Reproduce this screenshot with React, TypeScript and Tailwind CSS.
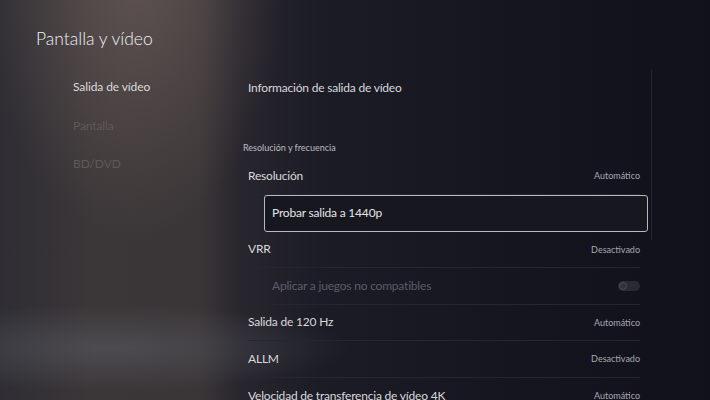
const menu = [
  { label: "Salida de vídeo", active: true },
  { label: "Pantalla", active: false },
  { label: "BD/DVD", active: false },
];

function Row({
  label,
  value,
  indent = false,
  dim = false,
  last = false,
  children,
}: {
  label: string;
  value?: string;
  indent?: boolean;
  dim?: boolean;
  last?: boolean;
  children?: React.ReactNode;
}) {
  return (
    <div
      className={`flex h-[36.5px] items-center justify-between ${indent ? "ml-[24px]" : ""} ${
        last ? "" : "border-b border-[#262632]"
      }`}
    >
      <span className={`text-[12px] tracking-[-0.2px] ${dim ? "text-[#5c5c66]" : "text-[#d8d8dd]"}`}>
        {label}
      </span>
      {value && <span className="text-[9px] text-[#a8a8b0]">{value}</span>}
      {children}
    </div>
  );
}

export default function App() {
  return (
    <div
      className="relative flex h-[400px] w-[710px] flex-col overflow-hidden bg-[radial-gradient(ellipse_150px_270px_at_135px_-30px,rgba(130,112,106,0.5),transparent),radial-gradient(ellipse_240px_44px_at_110px_348px,rgba(95,97,106,0.5),transparent),linear-gradient(90deg,#2f2e34_0px,#3b3638_90px,#3a3537_200px,#28262d_240px,#1c1c26_320px,#15151f_520px,#11111b_710px)]"
      style={{ fontFamily: 'Lato, "Noto Sans", sans-serif' }}
    >
      <header className="h-[68px] shrink-0 pl-[36px] pt-[27px]">
        <h1 className="text-[17.5px] font-light leading-[24px] text-[#f0f0f2]">Pantalla y vídeo</h1>
      </header>

      <div className="flex flex-1">
        <nav className="w-[240px] shrink-0 pl-[73px]">
          {menu.map((m) => (
            <div
              key={m.label}
              className={`flex h-[38.5px] items-center text-[12px] tracking-[-0.1px] ${
                m.active ? "text-[#dcdada]" : "text-[#5f5959]"
              }`}
            >
              {m.label}
            </div>
          ))}
        </nav>

        <main className="relative w-[412px] shrink-0">
          <div className="absolute right-0 top-[2px] h-[170px] w-px bg-[#262633]" />

          <div className="ml-[8px] mr-[12px] flex h-[39px] items-center text-[12px] tracking-[-0.2px] text-[#d8d8dd]">
            Información de salida de vídeo
          </div>

          <div className="mt-[33px] flex h-[16px] items-center pl-[3px] text-[9px] text-[#bcbcc2]">
            Resolución y frecuencia
          </div>

          <div className="ml-[8px] mr-[12px] mt-[2px]">
            <Row label="Resolución" value="Automático" />
            <div className="-mr-[8px] ml-[16px] flex h-[37px] items-center rounded-[3px] border-[1.5px] border-[#b9b9c0] bg-[#17171f] pl-[7px] text-[12px] tracking-[-0.2px] text-[#e4e4e8]">
              Probar salida a 1440p
            </div>
            <Row label="VRR" value="Desactivado" />
            <Row label="Aplicar a juegos no compatibles" indent dim>
              <span className="flex h-[10px] w-[22px] items-center rounded-full bg-[#2a2a34] pl-[1px]">
                <span className="h-[8px] w-[8px] rounded-full border border-[#4c4c58] bg-[#31313b]" />
              </span>
            </Row>
            <Row label="Salida de 120 Hz" value="Automático" />
            <Row label="ALLM" value="Desactivado" />
            <Row label="Velocidad de transferencia de vídeo 4K" value="Automático" last />
          </div>
        </main>
      </div>
    </div>
  );
}
